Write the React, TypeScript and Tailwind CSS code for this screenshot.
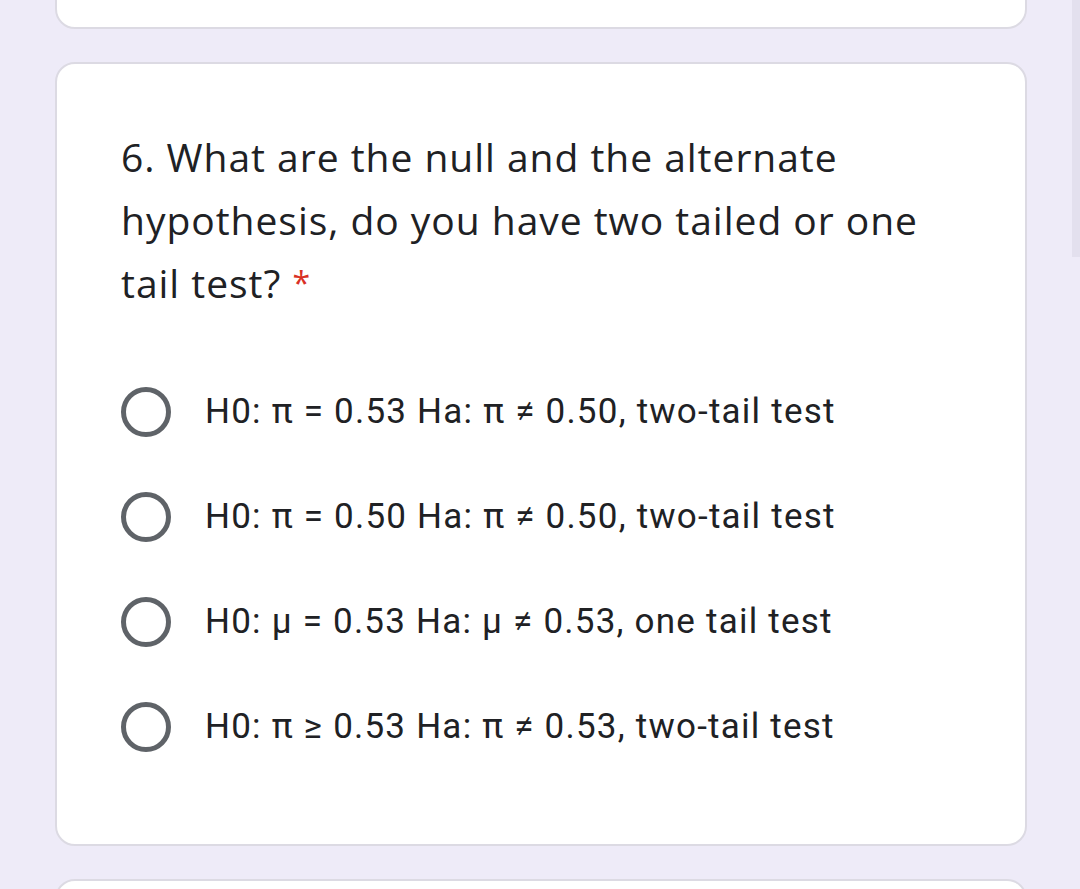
const options = [
  'H0: π = 0.53 Ha: π ≠ 0.50, two-tail test',
  'H0: π = 0.50 Ha: π ≠ 0.50, two-tail test',
  'H0: μ = 0.53 Ha: μ ≠ 0.53, one tail test',
  'H0: π ≥ 0.53 Ha: π ≠ 0.53, two-tail test',
];

function Radio() {
  return (
    <div className="h-[50px] w-[50px] flex-none rounded-full border-[5px] border-[#5f6368]" />
  );
}

export default function App() {
  return (
    <div className="relative h-[889px] w-[1080px] overflow-hidden bg-[#eeebf8]">
      <div className="absolute right-0 top-0 h-[257px] w-[8px] bg-[#e3e0ee]" />
      <div className="ml-[55px] flex w-[972px] flex-col gap-[33px]">
        <div className="-mt-[41px] h-[70px] rounded-[20px] border-2 border-[#dcdae3] bg-white" />

        <div className="rounded-[20px] border-2 border-[#dcdae3] bg-white pb-[92px] pl-[64px] pr-[70px] pt-[61px]">
          <h2 className="text-[39px] leading-[63px] tracking-[0.025em] text-[#202124] [font-family:'Open_Sans',sans-serif]">
            6. What are the null and the alternate hypothesis, do you have two tailed or one tail test?{' '}
            <span className="align-top text-[32px] text-[#d93025]">*</span>
          </h2>

          <div className="mt-[73px] flex flex-col gap-[55px]">
            {options.map((o) => (
              <label key={o} className="flex h-[50px] items-center gap-[34px]">
                <Radio />
                <span className="text-[35px] tracking-[0.035em] text-[#202124] [font-family:Roboto,sans-serif]">
                  {o}
                </span>
              </label>
            ))}
          </div>
        </div>

        <div className="h-[60px] rounded-[20px] border-2 border-[#dcdae3] bg-white" />
      </div>
    </div>
  );
}
